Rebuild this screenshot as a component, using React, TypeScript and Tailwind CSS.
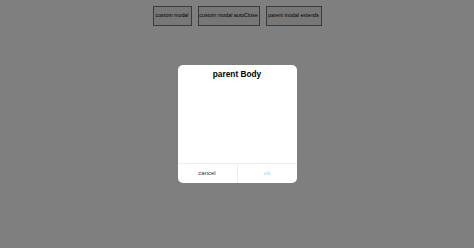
import React from "react";

export default function App() {
  return (
    <div className="relative h-[248px] w-[474px] overflow-hidden bg-white" style={{ fontFamily: '"Liberation Sans", Arial, sans-serif' }}>
      <div className="flex justify-center gap-[6px] pt-[6px]">
        <button className="h-[20px] w-[39px] border border-[#767676] bg-[#efefef] px-0 text-[5.3px] text-black">custom modal</button>
        <button className="h-[20px] w-[62px] border border-[#767676] bg-[#efefef] px-0 text-[5.3px] text-black">custom modal autoClose</button>
        <button className="h-[20px] w-[56px] border border-[#767676] bg-[#efefef] px-0 text-[5.3px] text-black">parent modal extends</button>
      </div>
      <div className="absolute inset-0 flex items-center justify-center bg-black/50">
        <div className="flex h-[118px] w-[119px] flex-col overflow-hidden rounded-[5px] bg-white">
          <div className="flex-1 pt-[3px] text-center text-[8.3px] font-bold text-black">parent Body</div>
          <div className="flex h-[20px] border-t border-[#eeeeee]">
            <div className="flex flex-1 items-center justify-center border-r border-[#eeeeee] text-[6px] text-[#333]">cancel</div>
            <div className="flex flex-1 items-center justify-center text-[6px] text-[#9fd3f3]">ok</div>
          </div>
        </div>
      </div>
    </div>
  );
}
